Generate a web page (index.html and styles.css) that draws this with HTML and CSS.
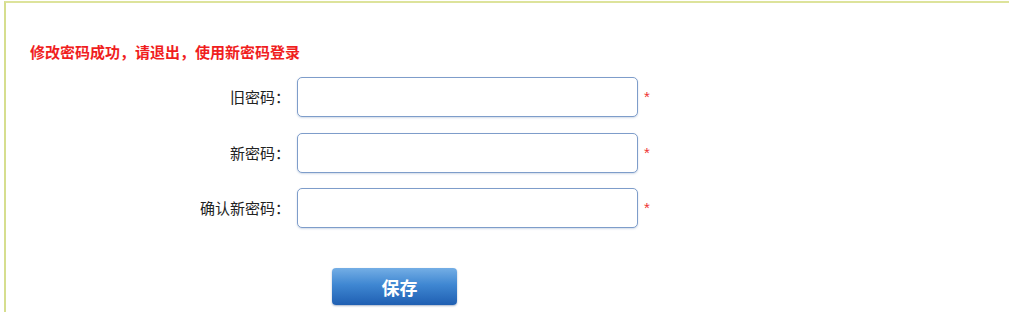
FILE: index.html
```html
<!DOCTYPE html>
<html lang="zh-CN">
<head>
<meta charset="utf-8">
<title>修改密码</title>
<link rel="stylesheet" href="styles.css">
</head>
<body>
<div class="panel">
  <p class="message">修改密码成功，请退出，使用新密码登录</p>
  <form class="form">
    <div class="row">
      <label class="label" for="old">旧密码：</label>
      <input class="field" id="old" type="password">
      <span class="req">*</span>
    </div>
    <div class="row">
      <label class="label" for="new">新密码：</label>
      <input class="field" id="new" type="password">
      <span class="req">*</span>
    </div>
    <div class="row">
      <label class="label" for="confirm">确认新密码：</label>
      <input class="field" id="confirm" type="password">
      <span class="req">*</span>
    </div>
    <div class="actions">
      <button class="save" type="button">保存</button>
    </div>
  </form>
</div>
</body>
</html>
```

FILE: styles.css
```css
html, body {
  margin: 0;
  padding: 0;
  background: #ffffff;
}
body {
  font-family: "Noto Sans CJK SC", "Noto Sans", sans-serif;
  color: #333333;
}
.panel {
  margin: 1px 0 0 4px;
  height: 320px;
  border-top: 2px solid #dde39b;
  border-left: 2px solid #d6de8e;
  box-sizing: border-box;
}
.message {
  margin: 39px 0 0 24px;
  font-size: 15px;
  line-height: 20px;
  font-weight: bold;
  color: #f01e1e;
}
.form {
  margin-top: 15px;
  display: flex;
  flex-direction: column;
  gap: 15.5px;
}
.row {
  display: flex;
  align-items: center;
  height: 40px;
}
.label {
  width: 284px;
  padding-right: 7px;
  text-align: right;
  font-size: 15px;
  line-height: 20px;
  color: #222;
}
.field {
  width: 341px;
  height: 40px;
  box-sizing: border-box;
  margin: 0;
  border: 1.5px solid #7e9dca;
  border-radius: 5px;
  box-shadow: 0 1px 2px rgba(120, 150, 190, 0.35);
  background: #fff;
  outline: none;
}
.req {
  margin-left: 6px;
  color: #ee3333;
  font-size: 15px;
  line-height: 14px;
  font-family: "Liberation Sans", sans-serif;
}
.actions {
  padding-left: 326px;
  margin-top: 24.5px;
}
.save {
  width: 125px;
  height: 37px;
  border: none;
  border-radius: 4px;
  background: linear-gradient(to bottom, #74aee5 0%, #3f87d2 45%, #1f5fb2 100%);
  box-shadow: 0 1px 2px rgba(40, 70, 120, 0.4);
  color: #ffffff;
  font-family: "Noto Sans CJK SC", sans-serif;
  font-size: 18px;
  font-weight: bold;
  padding: 0 0 0 10px;
  cursor: pointer;
}
```
